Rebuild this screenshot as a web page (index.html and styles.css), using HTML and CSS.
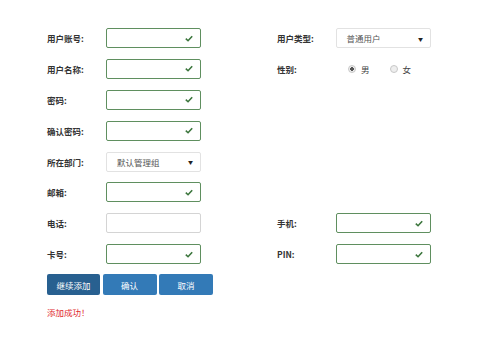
FILE: index.html
```html
<!DOCTYPE html>
<html>
<head>
<meta charset="utf-8">
<link rel="stylesheet" href="styles.css">
</head>
<body>
<form class="form">
  <div class="row">
    <div class="field"><label class="lbl">用户账号:</label><div class="box ok"><svg class="chk" viewBox="0 0 10 8"><path d="M1 4.2 L3.8 6.8 L9 1.2" /></svg></div></div>
    <div class="field"><label class="lbl">用户类型:</label><div class="box sel"><span class="val">普通用户</span><span class="caret">▼</span></div></div>
  </div>
  <div class="row">
    <div class="field"><label class="lbl">用户名称:</label><div class="box ok"><svg class="chk" viewBox="0 0 10 8"><path d="M1 4.2 L3.8 6.8 L9 1.2" /></svg></div></div>
    <div class="field"><label class="lbl">性别:</label><div class="radios"><span class="radio"><span class="dot on"></span>男</span><span class="radio"><span class="dot"></span>女</span></div></div>
  </div>
  <div class="row">
    <div class="field"><label class="lbl">密码:</label><div class="box ok"><svg class="chk" viewBox="0 0 10 8"><path d="M1 4.2 L3.8 6.8 L9 1.2" /></svg></div></div>
  </div>
  <div class="row">
    <div class="field"><label class="lbl">确认密码:</label><div class="box ok"><svg class="chk" viewBox="0 0 10 8"><path d="M1 4.2 L3.8 6.8 L9 1.2" /></svg></div></div>
  </div>
  <div class="row">
    <div class="field"><label class="lbl">所在部门:</label><div class="box sel"><span class="val">默认管理组</span><span class="caret">▼</span></div></div>
  </div>
  <div class="row">
    <div class="field"><label class="lbl">邮箱:</label><div class="box ok"><svg class="chk" viewBox="0 0 10 8"><path d="M1 4.2 L3.8 6.8 L9 1.2" /></svg></div></div>
  </div>
  <div class="row">
    <div class="field"><label class="lbl">电话:</label><div class="box"></div></div>
    <div class="field"><label class="lbl">手机:</label><div class="box ok"><svg class="chk" viewBox="0 0 10 8"><path d="M1 4.2 L3.8 6.8 L9 1.2" /></svg></div></div>
  </div>
  <div class="row">
    <div class="field"><label class="lbl">卡号:</label><div class="box ok"><svg class="chk" viewBox="0 0 10 8"><path d="M1 4.2 L3.8 6.8 L9 1.2" /></svg></div></div>
    <div class="field"><label class="lbl">PIN:</label><div class="box ok"><svg class="chk" viewBox="0 0 10 8"><path d="M1 4.2 L3.8 6.8 L9 1.2" /></svg></div></div>
  </div>
  <div class="btns">
    <button type="button" class="btn dark">继续添加</button>
    <button type="button" class="btn">确认</button>
    <button type="button" class="btn">取消</button>
  </div>
  <p class="msg">添加成功！</p>
</form>
</body>
</html>
```
FILE: styles.css
```css
html, body {
  margin: 0;
  padding: 0;
  background: #fff;
  font-family: "Noto Sans CJK SC", "Noto Sans", sans-serif;
  font-size: 8.5px;
  color: #333;
}
.form {
  padding: 28px 0 0 47px;
  display: flex;
  flex-direction: column;
}
.row {
  display: flex;
  gap: 76px;
  height: 20px;
  margin-bottom: 10.9px;
}
.field {
  display: flex;
  align-items: center;
  width: 154px;
}
.lbl {
  width: 59px;
  font-weight: bold;
  color: #333;
}
.box {
  box-sizing: border-box;
  width: 95px;
  height: 20px;
  border: 1px solid #d4d4d4;
  border-radius: 2px;
  display: flex;
  align-items: center;
  justify-content: flex-end;
  padding: 0 7px 0 10px;
}
.field + .field .box {
  width: 96px;
}
.box.ok {
  border-color: #5f8f5f;
}
.chk {
  width: 8px;
  height: 7px;
}
.chk path {
  fill: none;
  stroke: #3c763d;
  stroke-width: 2;
}
.box.sel {
  justify-content: space-between;
  border-color: #e2e2e2;
}
.val {
  color: #555;
}
.caret {
  font-size: 5px;
  color: #222;
}
.radios {
  display: flex;
  gap: 20px;
  padding-left: 12px;
}
.radio {
  display: flex;
  align-items: center;
  gap: 5px;
  color: #444;
}
.dot {
  box-sizing: border-box;
  width: 8px;
  height: 8px;
  border-radius: 50%;
  border: 1px solid #c8c8c8;
  background: #eee;
  display: inline-block;
}
.dot.on {
  background: radial-gradient(circle, #555 0 1.6px, #eee 2px);
}
.btns {
  display: flex;
  gap: 2.5px;
  margin-top: -1px;
}
.btn {
  width: 54px;
  height: 21px;
  border: 0;
  border-radius: 2px;
  background: #337ab7;
  color: #fff;
  font-family: inherit;
  font-size: 8.5px;
  padding: 0;
}
.btn.dark {
  width: 53px;
  background: #286090;
}
.msg {
  margin: 11px 0 0;
  color: #e0282d;
  font-size: 8.5px;
}
```
